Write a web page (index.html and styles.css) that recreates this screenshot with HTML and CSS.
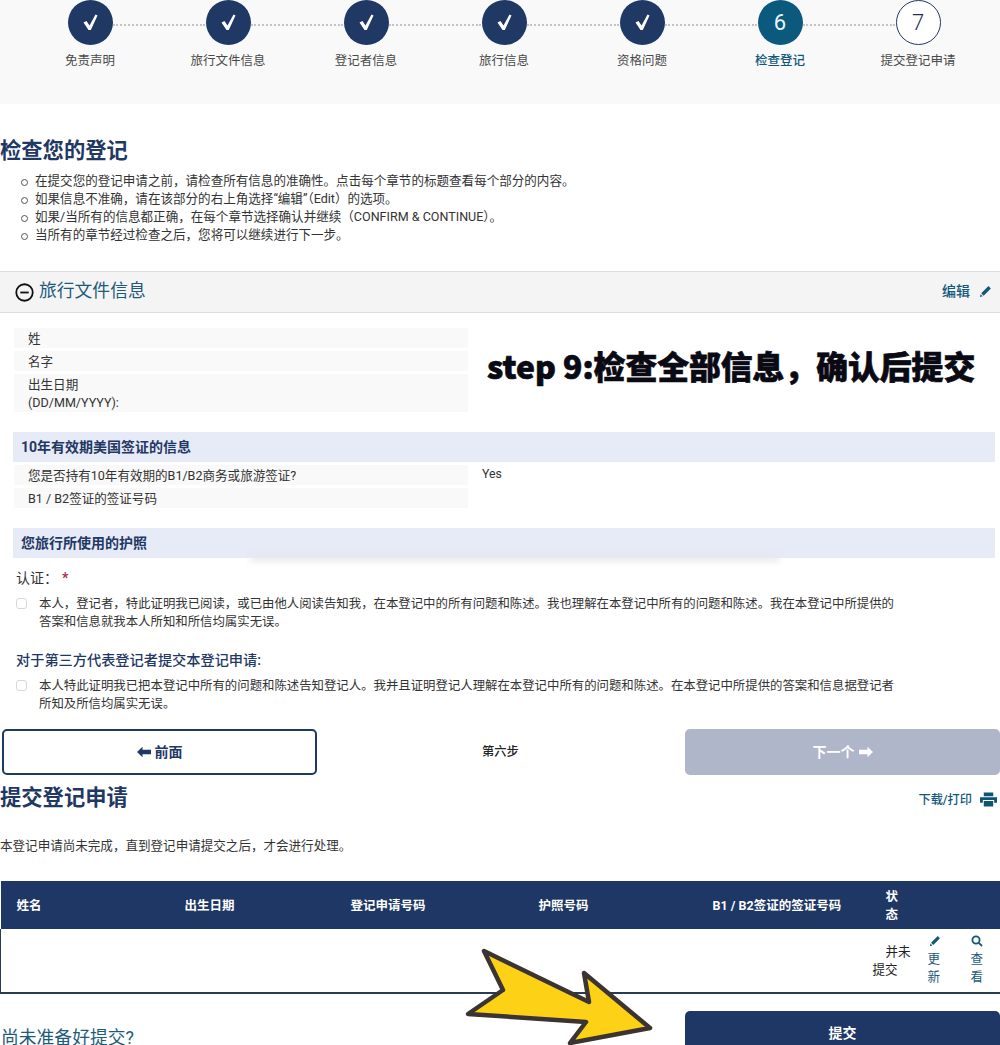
FILE: index.html
```html
<!DOCTYPE html>
<html lang="zh-CN">
<head>
<meta charset="utf-8">
<title>检查您的登记</title>
<link rel="stylesheet" href="styles.css">
</head>
<body>
<header class="stepper">
  <div class="step done"><span class="dot"><svg class="check" viewBox="0 0 45 45"><path d="M15.5 22.5L18.5 21L21.5 25.5L27.5 14.5L29.5 15.5L22.8 30L20.5 30Z"/></svg></span><span class="step-label">免责声明</span></div>
  <div class="step done"><span class="dot"><svg class="check" viewBox="0 0 45 45"><path d="M15.5 22.5L18.5 21L21.5 25.5L27.5 14.5L29.5 15.5L22.8 30L20.5 30Z"/></svg></span><span class="step-label">旅行文件信息</span></div>
  <div class="step done"><span class="dot"><svg class="check" viewBox="0 0 45 45"><path d="M15.5 22.5L18.5 21L21.5 25.5L27.5 14.5L29.5 15.5L22.8 30L20.5 30Z"/></svg></span><span class="step-label">登记者信息</span></div>
  <div class="step done"><span class="dot"><svg class="check" viewBox="0 0 45 45"><path d="M15.5 22.5L18.5 21L21.5 25.5L27.5 14.5L29.5 15.5L22.8 30L20.5 30Z"/></svg></span><span class="step-label">旅行信息</span></div>
  <div class="step done"><span class="dot"><svg class="check" viewBox="0 0 45 45"><path d="M15.5 22.5L18.5 21L21.5 25.5L27.5 14.5L29.5 15.5L22.8 30L20.5 30Z"/></svg></span><span class="step-label">资格问题</span></div>
  <div class="step current"><span class="dot">6</span><span class="step-label">检查登记</span></div>
  <div class="step todo"><span class="dot">7</span><span class="step-label">提交登记申请</span></div>
</header>

<main class="page">
  <h1 class="title">检查您的登记</h1>
  <ul class="notes">
    <li>在提交您的登记申请之前&#xFF0C;请检查所有信息的准确性。点击每个章节的标题查看每个部分的内容。</li>
    <li>如果信息不准确&#xFF0C;请在该部分的右上角选择“编辑”&#xFF08;Edit&#xFF09;的选项。</li>
    <li>如果/当所有的信息都正确&#xFF0C;在每个章节选择确认并继续&#xFF08;CONFIRM &amp; CONTINUE&#xFF09;。</li>
    <li>当所有的章节经过检查之后&#xFF0C;您将可以继续进行下一步。</li>
  </ul>

  <section class="accordion">
    <div class="accordion-title">
      <svg class="minus" viewBox="0 0 18 18"><circle cx="9" cy="9" r="7.8"/><path d="M5 9H13"/></svg>
      <span>旅行文件信息</span>
    </div>
    <a class="edit">编辑<svg class="pencil" viewBox="0 0 14 14"><path d="M10.2 1.2L12.8 3.8L5 11.6L2.4 9Z M1.8 10L4 12.2L1 13Z"/></svg></a>
  </section>

  <div class="fields first">
    <div class="field-row"><div class="field">姓</div></div>
    <div class="field-row"><div class="field">名字</div></div>
    <div class="field-row"><div class="field">出生日期<br>(DD/MM/YYYY):</div></div>
  </div>

  <h3 class="band">10年有效期美国签证的信息</h3>
  <div class="fields">
    <div class="field-row"><div class="field">您是否持有10年有效期的B1/B2商务或旅游签证?</div><div class="value">Yes</div></div>
    <div class="field-row"><div class="field">B1 / B2签证的签证号码</div></div>
  </div>

  <h3 class="band">您旅行所使用的护照</h3>

  <p class="cert-label">认证&#xFF1A;<span class="req">*</span></p>
  <div class="cert first-cert">
    <span class="box"></span>
    <p class="cert-text">本人&#xFF0C;登记者&#xFF0C;特此证明我已阅读&#xFF0C;或已由他人阅读告知我&#xFF0C;在本登记中的所有问题和陈述。我也理解在本登记中所有的问题和陈述。我在本登记中所提供的答案和信息就我本人所知和所信均属实无误。</p>
  </div>
  <p class="third">对于第三方代表登记者提交本登记申请:</p>
  <div class="cert">
    <span class="box"></span>
    <p class="cert-text">本人特此证明我已把本登记中所有的问题和陈述告知登记人。我并且证明登记人理解在本登记中所有的问题和陈述。在本登记中所提供的答案和信息据登记者所知及所信均属实无误。</p>
  </div>

  <nav class="pager">
    <button class="btn prev"><svg class="arr" viewBox="0 0 14 12"><path d="M0 6L5.5 .8V3.8H14V8.2H5.5V11.2Z"/></svg> 前面</button>
    <span class="pager-step">第六步</span>
    <button class="btn next">下一个 <svg class="arr" viewBox="0 0 14 12"><path d="M14 6L8.5 .8V3.8H0V8.2H8.5V11.2Z"/></svg></button>
  </nav>

  <div class="submit-head">
    <h2 class="title">提交登记申请</h2>
    <a class="print">下载/打印<svg class="printer" viewBox="0 0 18 15"><path d="M4 0H14V4H4Z M0 5H18V11H15V8H3V11H0Z M4 9H14V15H4Z"/></svg></a>
  </div>
  <p class="notice">本登记申请尚未完成&#xFF0C;直到登记申请提交之后&#xFF0C;才会进行处理。</p>

  <table class="summary">
    <colgroup>
      <col class="c1"><col class="c2"><col class="c3"><col class="c4"><col class="c5"><col class="c6"><col class="c7"><col class="c8">
    </colgroup>
    <thead>
      <tr><th>姓名</th><th>出生日期</th><th>登记申请号码</th><th>护照号码</th><th>B1 / B2签证的签证号码</th><th class="narrow">状态</th><th></th><th></th></tr>
    </thead>
    <tbody>
      <tr>
        <td></td><td></td><td></td><td></td><td></td>
        <td class="status"><span class="s1">并未</span><span class="s2">提交</span></td>
        <td class="act"><svg class="pencil" viewBox="0 0 14 14"><path d="M10.2 1.2L12.8 3.8L5 11.6L2.4 9Z M1.8 10L4 12.2L1 13Z"/></svg><span class="stack">更新</span></td>
        <td class="act"><svg class="search" viewBox="0 0 12 12"><circle cx="5" cy="5" r="3.6"/><path d="M7.8 7.8L11 11"/></svg><span class="stack">查看</span></td>
      </tr>
    </tbody>
  </table>

  <div class="finish">
    <h3 class="not-ready">尚未准备好提交?</h3>
    <button class="btn submit">提交</button>
  </div>
</main>

<div class="banner">step 9:检查全部信息&#xFF0C;确认后提交</div>
<div class="smudge"></div>
<svg class="pointer" viewBox="0 0 200 110"><path d="M24 6L129 57L124 28L190 83L110 98L126 77L8 69L43 45Z"/></svg>
</body>
</html>
```

FILE: styles.css
```css
* { box-sizing: border-box; }
html, body { margin: 0; padding: 0; height: 1045px; overflow: hidden; background: #fff; }
body {
  position: relative;
  font-family: Roboto, "Noto Sans CJK SC", "Noto Sans", sans-serif;
  font-size: 12.55px;
  line-height: 18px;
  color: #333;
}
p, h1, h2, h3, ul { margin: 0; padding: 0; }

.stepper {
  height: 104px;
  background: #f9f9f9;
  padding: 0 13px 0 21px;
  display: grid;
  grid-template-columns: repeat(7, 138px);
}
.step { position: relative; display: flex; flex-direction: column; align-items: center; }
.step::after {
  content: "";
  position: absolute;
  top: 24px;
  left: calc(50% + 23px);
  width: 92px;
  border-top: 2px dotted #c4c4c4;
}
.step:last-child::after { display: none; }
.dot {
  width: 45px;
  height: 45px;
  border-radius: 50%;
  background: #1f3864;
  color: #fff;
  display: flex;
  align-items: center;
  justify-content: center;
  font-size: 22px;
  line-height: 1;
}
.check { width: 45px; height: 45px; fill: #fff; }
.step-label { margin-top: 7px; font-size: 12.5px; color: #4a4a4a; }
.current .dot { background: #0b5a7d; color: #e4f6fb; }
.current .step-label { color: #12587a; font-weight: 500; }
.todo .dot { background: #fff; border: 1.5px solid #1f3864; color: #26304a; font-weight: 300; }

.title { font-size: 21.3px; line-height: 30px; font-weight: 700; color: #1f3864; }
.page > .title { margin-top: 32px; }

.notes { list-style: none; margin-top: 6px; padding-left: 35px; }
.notes li { position: relative; }
.notes li::before {
  content: "";
  position: absolute;
  left: -14px;
  top: 7px;
  width: 5px;
  height: 5px;
  border: 1px solid #555;
  border-radius: 50%;
}

.accordion {
  margin-top: 27px;
  height: 42px;
  background: #f4f4f4;
  border-top: 1px solid #ddd;
  border-bottom: 1px solid #ddd;
  padding: 0 8px 2px 15px;
  display: flex;
  align-items: center;
  justify-content: space-between;
}
.accordion-title { display: flex; align-items: center; gap: 5px; font-size: 17.8px; color: #1d5b7a; }
.minus { width: 19px; height: 19px; fill: none; stroke: #111; stroke-width: 1.7; margin-top: 2px; }
.edit { display: flex; align-items: center; gap: 9px; font-size: 14px; font-weight: 500; color: #12587a; }
.pencil { width: 13px; height: 13px; fill: #12587a; }

.fields { display: flex; flex-direction: column; gap: 3px; margin-top: 3px; padding-left: 14px; }
.fields.first { margin-top: 15px; }
.field-row { display: flex; gap: 14px; }
.field { width: 454px; min-height: 20px; padding: 2px 14px 0; background: #f9f9f9; }
.value { font-size: 12.3px; color: #333; line-height: 18px; }

.band {
  margin: 20px 5px 0 13px;
  height: 30px;
  padding-left: 8px;
  background: #e7ebf7;
  color: #1f3864;
  font-size: 14px;
  line-height: 30px;
  font-weight: 700;
}
.cert-label { margin: 10px 0 0 16px; font-size: 14px; line-height: 20px; }
.req { margin-left: 4px; color: #a8324a; font-weight: 700; }
.cert { display: flex; gap: 12px; margin-top: 7px; padding-left: 16px; }
.first-cert { margin-top: 7px; }
.box {
  flex: none;
  width: 11px;
  height: 11px;
  margin-top: 3px;
  border: 1px solid #d8d8d8;
  border-radius: 3px;
  background: #fff;
}
.cert-text { width: 860px; font-size: 12.4px; }
.third { margin: 19px 0 0 16px; font-size: 14.2px; line-height: 20px; font-weight: 500; color: #1f3864; }

.pager { display: flex; align-items: center; margin: 16px 0 0 2px; }
.btn {
  width: 315px;
  height: 46px;
  padding: 0 0 1px;
  border-radius: 5px;
  font: 700 14px/1 Roboto, "Noto Sans CJK SC", sans-serif;
  display: flex;
  align-items: center;
  justify-content: center;
  gap: 4px;
  border: 0;
}
.arr { width: 14px; height: 12px; fill: currentColor; }
.prev { background: #fff; border: 2px solid #1f3864; color: #1f3864; }
.pager-step { width: 368px; padding-left: 165px; font-size: 12.3px; font-weight: 500; color: #222; }
.next { background: #afb6ca; color: #fff; }

.submit-head { display: flex; align-items: center; justify-content: space-between; margin-top: 8px; padding-right: 3px; }
.print { display: flex; align-items: center; gap: 8px; margin-top: 4px; font-size: 12.2px; font-weight: 500; color: #12587a; }
.printer { width: 17px; height: 15px; fill: #0f5474; margin-top: -2px; }
.notice { margin-top: 24px; }

.summary { width: 1000px; margin-top: 26px; border-collapse: collapse; table-layout: fixed; }
.c1 { width: 168px; }
.c2 { width: 166px; }
.c3 { width: 188px; }
.c4 { width: 174px; }
.c5 { width: 173px; }
.c6 { width: 43px; }
.c7 { width: 43px; }
.c8 { width: 45px; }
.summary th {
  height: 48px;
  padding: 2px 0 0 16px;
  background: #1e3764;
  color: #fff;
  font-size: 12.5px;
  font-weight: 700;
  text-align: left;
}
.summary .narrow { padding-right: 12px; }
.summary tbody tr { height: 64px; border: 1px solid #2b3a55; border-top: 0; border-bottom-width: 2px; }
.summary td { padding: 0; vertical-align: middle; }
.status { color: #222; }
.s1 { display: block; text-align: right; padding-right: 2px; }
.s2 { display: block; margin-left: 3px; }
.summary .act { padding-left: 15px; color: #1d5b7a; line-height: 18px; }
.stack { display: block; width: 1em; }
.act .pencil { display: block; width: 12px; height: 12px; margin: 0 0 3px 1px; }
.search { display: block; width: 12px; height: 12px; margin-bottom: 3px; fill: none; stroke: #12587a; stroke-width: 1.8; }

.finish { display: flex; align-items: flex-start; justify-content: space-between; margin-top: 17px; padding-left: 1px; }
.not-ready { margin-top: 14px; font-size: 17.8px; line-height: 26px; font-weight: 400; color: #1d5b7a; }
.submit { background: #1e3764; color: #fff; padding-bottom: 3px; }

.banner {
  position: absolute;
  left: 487px;
  top: 342px;
  font: 900 31.8px/46px "Noto Sans CJK SC", sans-serif;
  color: #0a0a14;
  -webkit-text-stroke: 0.7px #0a0a14;
  white-space: nowrap;
}
.smudge {
  position: absolute;
  left: 250px;
  top: 555px;
  width: 530px;
  height: 6px;
  background: #e6e7ec;
  filter: blur(3px);
}
.pointer {
  position: absolute;
  left: 460px;
  top: 945px;
  width: 200px;
  height: 110px;
  fill: #fcd116;
  stroke: #3b3432;
  stroke-width: 4.5;
  stroke-linejoin: round;
}
```
